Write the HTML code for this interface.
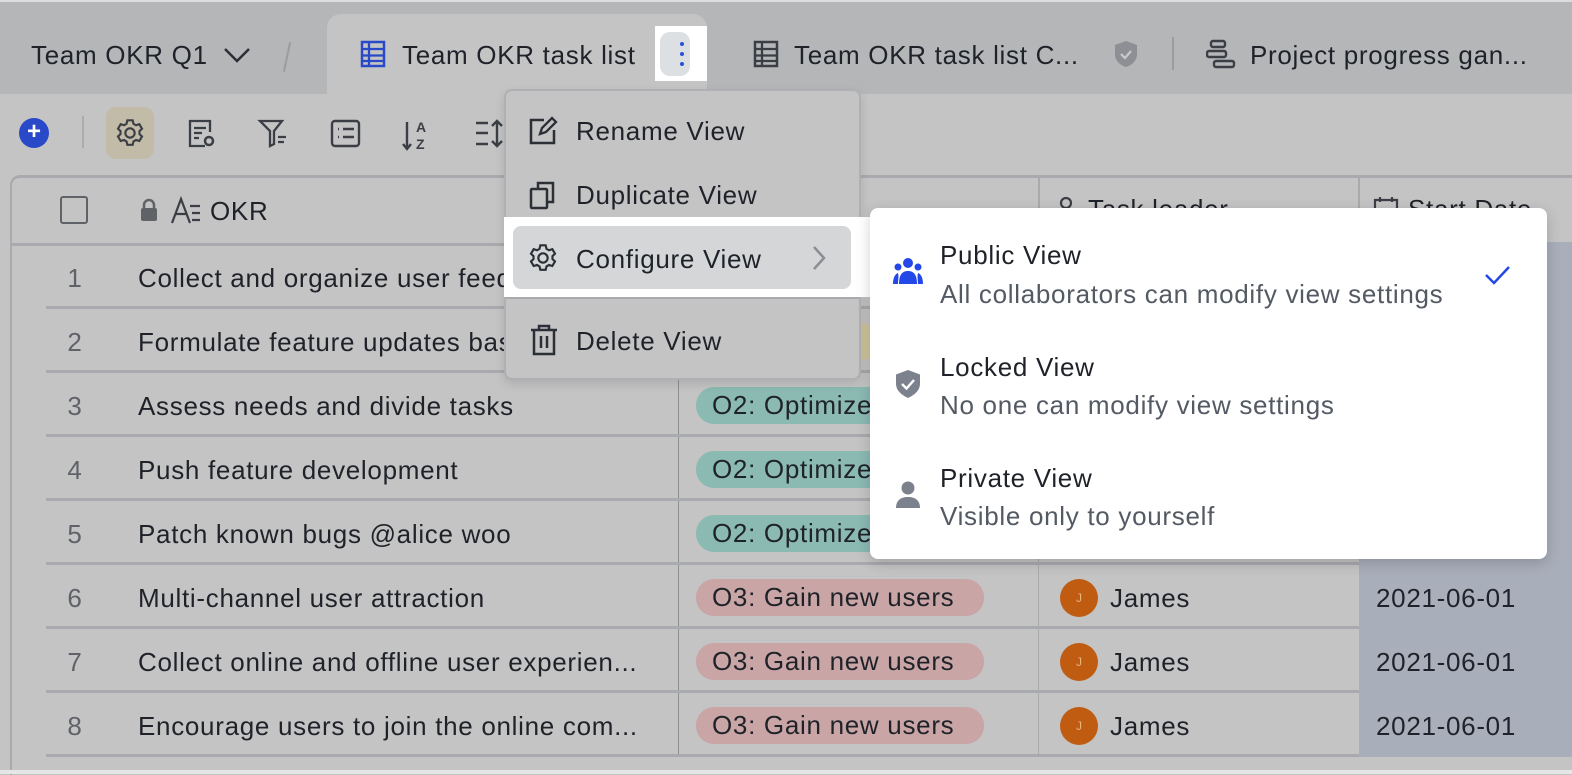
<!DOCTYPE html>
<html><head><meta charset="utf-8">
<style>
*{margin:0;padding:0;box-sizing:border-box}
body{width:1572px;height:774px;overflow:hidden;background:#c4c4c4;font-family:"Liberation Sans",Arial,sans-serif;color:#1f2329;position:relative}
.a{position:absolute;white-space:nowrap}
.t{font-size:26px;line-height:30px;letter-spacing:.7px}
.row{position:absolute;left:46px;width:1526px;height:64px;border-bottom:3px solid #a9aaae;font-size:26px;letter-spacing:.7px}
.num{position:absolute;left:20px;width:18px;text-align:center;top:18px;color:#5f6368;line-height:30px}
.txt{position:absolute;left:92px;top:18px;line-height:30px}
.tag{position:absolute;left:650px;top:14px;height:37px;border-radius:18px;padding:3px 16px;line-height:31px;color:#1f2329}
.g{background:#8bbab2}
.r{background:#c9a5a6;width:288px}
.av{position:absolute;left:1014px;top:14px;width:38px;height:38px;border-radius:50%;background:#c05c12;color:#e8b27a;font-size:12px;text-align:center;line-height:38px;letter-spacing:0}
.nm{position:absolute;left:1064px;top:18px;line-height:30px}
.dt{position:absolute;left:1313px;top:-3px;width:213px;height:67px;background:#a9aebb;padding:21px 0 0 17px;line-height:30px}
</style></head><body>
<!-- tab bar -->
<div class="a" style="left:0;top:0;width:1572px;height:94px;background:#b5b6b8"></div>
<div class="a" style="left:0;top:0;width:1572px;height:2px;background:#ddd"></div>
<div class="a" style="left:327px;top:14px;width:380px;height:80px;background:#c4c4c4;border-radius:14px 14px 0 0"></div>
<div class="a t" style="left:31px;top:40px">Team OKR Q1</div>
<svg class="a" style="left:222px;top:45px" width="30" height="20"><path d="M3 4l12 12 12-12" stroke="#2b2f36" stroke-width="2.5" fill="none"/></svg>
<div class="a" style="left:286px;top:42px;width:2px;height:30px;background:#9a9ca0;transform:rotate(12deg)"></div>
<svg class="a" style="left:360px;top:40px" width="26" height="28"><rect x="2" y="2" width="22" height="24" fill="none" stroke="#2a49c8" stroke-width="2.5"/><path d="M2 9h22M2 15.5h22M2 21h22M9 2v24" stroke="#2a49c8" stroke-width="2.3"/></svg>
<div class="a t" style="left:402px;top:40px">Team OKR task list</div>
<div class="a" style="left:655px;top:26px;width:52px;height:55px;background:#fff"></div>
<div class="a" style="left:660px;top:32px;width:30px;height:44px;background:#dde0e3;border-radius:10px"></div>
<div class="a" style="left:680px;top:42px;width:4px;height:4px;border-radius:2px;background:#2e4fd8;box-shadow:0 10px 0 #2e4fd8,0 20px 0 #2e4fd8"></div>
<svg class="a" style="left:753px;top:40px" width="26" height="28"><rect x="2" y="2" width="22" height="24" fill="none" stroke="#3b3f45" stroke-width="2.5"/><path d="M2 9h22M2 15.5h22M2 21h22M9 2v24" stroke="#3b3f45" stroke-width="2.3"/></svg>
<div class="a t" style="left:794px;top:40px">Team OKR task list C...</div>
<svg class="a" style="left:1112px;top:39px" width="28" height="30"><path d="M14 2l11 4v9c0 7-5 11-11 13C8 26 3 22 3 15V6z" fill="#8d8f94"/><path d="M9 15l4 4 6-7" stroke="#c8c9cc" stroke-width="2.2" fill="none"/></svg>
<div class="a" style="left:1172px;top:37px;width:2px;height:33px;background:#9a9ca0"></div>
<svg class="a" style="left:1206px;top:39px" width="32" height="30"><rect x="5" y="2" width="14" height="6" rx="2" fill="none" stroke="#3b3f45" stroke-width="2.4"/><rect x="1" y="12" width="19" height="6" rx="2" fill="none" stroke="#3b3f45" stroke-width="2.4"/><rect x="8" y="22" width="20" height="6" rx="2" fill="none" stroke="#3b3f45" stroke-width="2.4"/></svg>
<div class="a t" style="left:1250px;top:40px">Project progress gan...</div>

<!-- toolbar -->
<div class="a" style="left:19px;top:118px;width:30px;height:30px;border-radius:50%;background:#2a49c8;color:#fff;font-size:24px;line-height:28px;text-align:center;font-weight:bold">+</div>
<div class="a" style="left:82px;top:116px;width:2px;height:32px;background:#aaacb0"></div>
<div class="a" style="left:106px;top:107px;width:48px;height:52px;border-radius:10px;background:#c1bba7"></div>
<svg class="a" style="left:114px;top:117px" width="32" height="32" viewBox="0 0 24 24"><path d="M12 8.5a3.5 3.5 0 1 0 0 7 3.5 3.5 0 0 0 0-7zM10 2.5h4l.6 2.6 1.9 1.1 2.5-.8 2 3.4-1.9 1.8v2.2l1.9 1.8-2 3.4-2.5-.8-1.9 1.1-.6 2.6h-4l-.6-2.6-1.9-1.1-2.5.8-2-3.4 1.9-1.8v-2.2L3 8.8l2-3.4 2.5.8 1.9-1.1z" fill="none" stroke="#3b3f45" stroke-width="1.6"/></svg>
<svg class="a" style="left:186px;top:118px" width="34" height="32"><path d="M19 28H4V3h20v11M8 10h12M8 15h8M8 20h5" stroke="#3b3f45" stroke-width="2.3" fill="none"/><circle cx="23" cy="23" r="4" fill="none" stroke="#3b3f45" stroke-width="2.5"/></svg>
<svg class="a" style="left:257px;top:118px" width="34" height="32"><path d="M3 3h22l-8 10v13l-4 2V13z" stroke="#3b3f45" stroke-width="2.3" fill="none"/><path d="M21 19h8M21 24h6" stroke="#3b3f45" stroke-width="2.3"/></svg>
<svg class="a" style="left:330px;top:118px" width="32" height="32"><rect x="2" y="3" width="27" height="25" rx="3" fill="none" stroke="#3b3f45" stroke-width="2.4"/><path d="M8 11h1M13 11h11M8 19h1M13 19h11" stroke="#3b3f45" stroke-width="2.4"/></svg>
<svg class="a" style="left:402px;top:116px" width="32" height="36"><path d="M5 6v26M1 28l4 5 4-5" stroke="#3b3f45" stroke-width="2.4" fill="none"/><text x="14" y="16" font-size="14" font-weight="bold" fill="#3b3f45" font-family="Liberation Sans">A</text><text x="14" y="33" font-size="14" font-weight="bold" fill="#3b3f45" font-family="Liberation Sans">Z</text></svg>
<svg class="a" style="left:474px;top:118px" width="32" height="32"><path d="M2 5h12M2 15h12M2 26h12M23 3v25M18 8l5-5 5 5M18 23l5 5 5-5" stroke="#3b3f45" stroke-width="2.4" fill="none"/></svg>

<!-- table -->
<div class="a" style="left:10px;top:175px;width:1562px;height:600px;border-left:2px solid #a9aaae;border-top:3px solid #a9aaae;border-radius:10px 0 0 0"></div>
<div class="a" style="left:10px;top:243px;width:1562px;height:3px;background:#a9aaae"></div>
<div class="a" style="left:60px;top:196px;width:28px;height:28px;border:2.5px solid #5f6368;border-radius:3px"></div>
<svg class="a" style="left:139px;top:198px" width="20" height="24"><rect x="2" y="10" width="16" height="13" rx="2" fill="#5f6368"/><path d="M5 10V7a5 5 0 0 1 10 0v3" stroke="#5f6368" stroke-width="2.5" fill="none"/></svg>
<svg class="a" style="left:170px;top:196px" width="36" height="30"><path d="M2 27L11 3l9 24M6 18h10" stroke="#3b3f45" stroke-width="2.2" fill="none"/><path d="M20 10h10M22 17h8M22 24h8" stroke="#3b3f45" stroke-width="2.2"/></svg>
<div class="a t" style="left:210px;top:196px">OKR</div>
<div class="a" style="left:1038px;top:175px;width:2px;height:70px;background:#a9aaae"></div>
<div class="a" style="left:1358px;top:175px;width:2px;height:70px;background:#a9aaae"></div>
<svg class="a" style="left:1056px;top:196px" width="20" height="14"><circle cx="10" cy="7" r="5" fill="none" stroke="#3b3f45" stroke-width="2.2"/></svg>
<div class="a t" style="left:1088px;top:194px;height:15px;overflow:hidden">Task leader</div>
<svg class="a" style="left:1373px;top:196px" width="26" height="14"><path d="M2 14V4h22v10M7 1v5M19 1v5" stroke="#3b3f45" stroke-width="2.2" fill="none"/></svg>
<div class="a t" style="left:1408px;top:194px;height:15px;overflow:hidden">Start Date</div>
<div class="a" style="left:678px;top:245px;width:1px;height:510px;background:#8d8e92"></div>
<div class="a" style="left:1038px;top:245px;width:1px;height:510px;background:#a9aaae"></div>

<div class="row" style="top:245px"><div class="num">1</div><div class="txt">Collect and organize user feedback</div><div class="tag" style="background:#cfc69d">O1: Improve</div><div class="dt" style="color:#2a49c8">2021-06-01</div></div>
<div class="row" style="top:309px"><div class="num">2</div><div class="txt">Formulate feature updates based</div><div class="tag" style="background:#cfc69d">O1: Improve</div><div class="dt">2021-06-01</div></div>
<div class="row" style="top:373px"><div class="num">3</div><div class="txt">Assess needs and divide tasks</div><div class="tag g">O2: Optimize the product</div><div class="dt">2021-06-01</div></div>
<div class="row" style="top:437px"><div class="num">4</div><div class="txt">Push feature development</div><div class="tag g">O2: Optimize the product</div><div class="dt">2021-06-01</div></div>
<div class="row" style="top:501px"><div class="num">5</div><div class="txt">Patch known bugs @alice woo</div><div class="tag g">O2: Optimize the product</div><div class="dt">2021-06-01</div></div>
<div class="row" style="top:565px"><div class="num">6</div><div class="txt">Multi-channel user attraction</div><div class="tag r">O3: Gain new users</div><div class="av">J</div><div class="nm">James</div><div class="dt">2021-06-01</div></div>
<div class="row" style="top:629px"><div class="num">7</div><div class="txt">Collect online and offline user experien...</div><div class="tag r">O3: Gain new users</div><div class="av">J</div><div class="nm">James</div><div class="dt">2021-06-01</div></div>
<div class="row" style="top:693px"><div class="num">8</div><div class="txt">Encourage users to join the online com...</div><div class="tag r">O3: Gain new users</div><div class="av">J</div><div class="nm">James</div><div class="dt">2021-06-01</div></div>
<div class="a" style="left:0;top:770px;width:1572px;height:4px;background:#e6e6e6"></div>

<!-- menu -->
<div class="a" style="left:504px;top:89px;width:357px;height:291px;background:#c4c4c4;border:2px solid #aeb0b3;border-radius:8px;box-shadow:0 4px 10px rgba(0,0,0,.12)"></div>
<div class="a" style="left:504px;top:217px;width:366px;height:80px;background:#fff"></div>
<div class="a" style="left:513px;top:226px;width:338px;height:63px;background:#d4d6d8;border-radius:8px"></div>
<div class="a" style="left:506px;top:297px;width:353px;height:2px;background:#a9aaae"></div>
<svg class="a" style="left:528px;top:116px" width="32" height="30"><path d="M16 4H3v23h23V14" stroke="#2b2f36" stroke-width="2.5" fill="none"/><path d="M12 18l2-6L24 2l4 4-10 10z" stroke="#2b2f36" stroke-width="2.3" fill="none"/></svg>
<div class="a t" style="left:576px;top:116px">Rename View</div>
<svg class="a" style="left:528px;top:180px" width="30" height="30"><rect x="3" y="9" width="16" height="19" rx="1" fill="none" stroke="#2b2f36" stroke-width="2.5"/><path d="M10 9V3h15v19h-6" stroke="#2b2f36" stroke-width="2.5" fill="none"/></svg>
<div class="a t" style="left:576px;top:180px">Duplicate View</div>
<svg class="a" style="left:527px;top:242px" width="32" height="32" viewBox="0 0 24 24"><path d="M12 8.5a3.5 3.5 0 1 0 0 7 3.5 3.5 0 0 0 0-7zM10 2.5h4l.6 2.6 1.9 1.1 2.5-.8 2 3.4-1.9 1.8v2.2l1.9 1.8-2 3.4-2.5-.8-1.9 1.1-.6 2.6h-4l-.6-2.6-1.9-1.1-2.5.8-2-3.4 1.9-1.8v-2.2L3 8.8l2-3.4 2.5.8 1.9-1.1z" fill="none" stroke="#2b2f36" stroke-width="1.6"/></svg>
<div class="a t" style="left:576px;top:244px">Configure View</div>
<svg class="a" style="left:810px;top:244px" width="20" height="28"><path d="M4 3l10 11L4 25" stroke="#8a8d92" stroke-width="2.5" fill="none"/></svg>
<svg class="a" style="left:529px;top:324px" width="30" height="32"><path d="M2 6h26M10 6V2h10v4M5 6v24h20V6M12 12v12M18 12v12" stroke="#2b2f36" stroke-width="2.5" fill="none"/></svg>
<div class="a t" style="left:576px;top:326px">Delete View</div>

<!-- submenu -->
<div class="a" style="left:870px;top:208px;width:677px;height:351px;background:#fff;border-radius:8px;box-shadow:0 4px 14px rgba(0,0,0,.18)"></div>
<svg class="a" style="left:892px;top:257px" width="32" height="28"><circle cx="16" cy="6" r="5" fill="#2447e8"/><circle cx="6" cy="10" r="3.5" fill="#2447e8"/><circle cx="26" cy="10" r="3.5" fill="#2447e8"/><path d="M7 27c0-9 3-13 9-13s9 4 9 13z" fill="#2447e8"/><path d="M1 27c0-6 2-10 5-11 1 3 0 8 0 11zM31 27c0-6-2-10-5-11-1 3 0 8 0 11z" fill="#2447e8"/></svg>
<div class="a t" style="left:940px;top:240px">Public View</div>
<div class="a t" style="left:940px;top:279px;color:#545a63">All collaborators can modify view settings</div>
<svg class="a" style="left:1484px;top:264px" width="28" height="22"><path d="M2 11l8 8L25 3" stroke="#2447e8" stroke-width="2.5" fill="none"/></svg>
<svg class="a" style="left:894px;top:368px" width="28" height="32"><path d="M14 2l12 4.5v9C26 23 20 27 14 30 8 27 2 23 2 15.5v-9z" fill="#7c828d"/><path d="M8 16l4.5 4.5L20 12" stroke="#fff" stroke-width="2.4" fill="none"/></svg>
<div class="a t" style="left:940px;top:352px">Locked View</div>
<div class="a t" style="left:940px;top:390px;color:#545a63">No one can modify view settings</div>
<svg class="a" style="left:894px;top:480px" width="28" height="30"><circle cx="14" cy="8" r="6.5" fill="#7c828d"/><path d="M2 28c0-7 4-11 12-11s12 4 12 11z" fill="#7c828d"/></svg>
<div class="a t" style="left:940px;top:463px">Private View</div>
<div class="a t" style="left:940px;top:501px;color:#545a63">Visible only to yourself</div>
</body></html>
